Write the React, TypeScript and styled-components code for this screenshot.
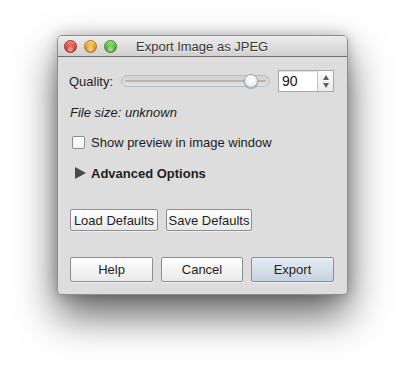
import styled, { createGlobalStyle } from 'styled-components'

const GlobalStyle = createGlobalStyle`
  html, body {
    margin: 0;
    background: #ffffff;
  }
  body {
    font-family: "Liberation Sans", Arial, sans-serif;
    font-size: 13px;
    color: #1e1e1e;
  }
`

const Page = styled.div`
  width: 405px;
  height: 374px;
  padding: 35px 0 0 57px;
  box-sizing: border-box;
  overflow: hidden;
`

const Window = styled.div`
  width: 291px;
  height: 260px;
  box-sizing: border-box;
  display: flex;
  flex-direction: column;
  background: #dddddd;
  border: 1px solid #8e8e8e;
  border-radius: 5px 5px 4px 4px;
  box-shadow: 0 20px 40px rgba(0, 0, 0, 0.62), 0 0 14px rgba(0, 0, 0, 0.22);
  overflow: hidden;
`

const TitleBar = styled.div`
  height: 20px;
  flex: none;
  display: flex;
  align-items: center;
  padding-left: 6px;
  background: linear-gradient(#ededed, #d0d0d0);
  border-bottom: 1px solid #6f6f6f;
`

const Lights = styled.div`
  display: flex;
  gap: 7px;
`

const Light = styled.span<{ $color: string; $edge: string }>`
  width: 13px;
  height: 13px;
  border-radius: 50%;
  box-sizing: border-box;
  border: 1px solid ${p => p.$edge};
  background: radial-gradient(circle at 50% 80%, #ffffff99 0, transparent 40%),
    radial-gradient(circle at 50% 30%, ${p => p.$color} 0, ${p => p.$edge} 110%);
  box-shadow: inset 0 1px 1px rgba(255, 255, 255, 0.5);
`

const Title = styled.span`
  margin-left: 19px;
  font-size: 13px;
  color: #383838;
  text-shadow: 0 1px 0 rgba(255, 255, 255, 0.6);
`

const Body = styled.div`
  flex: 1;
  display: flex;
  flex-direction: column;
  padding: 13px 13px 12px 11px;
`

const QualityRow = styled.div`
  height: 22px;
  display: flex;
  align-items: center;
`

const Label = styled.span`
  width: 52px;
`

const Track = styled.div`
  width: 150px;
  height: 12px;
  box-sizing: border-box;
  border: 1px solid #b0bdca;
  border-radius: 7px;
  background: linear-gradient(#d2d2d2, #e2e2e2);
  position: relative;

  &::after {
    content: '';
    position: absolute;
    left: 3px;
    right: 3px;
    top: 4px;
    height: 2px;
    background: #b5b5b5;
    border-radius: 1px;
  }
`

const Thumb = styled.span`
  position: absolute;
  top: -2px;
  width: 14px;
  height: 14px;
  box-sizing: border-box;
  border-radius: 50%;
  border: 1px solid #a5a5a5;
  background: radial-gradient(circle at 50% 35%, #ffffff 0, #f1f1f1 55%, #d5d5d5 100%);
  box-shadow: 0 1px 1px rgba(0, 0, 0, 0.25);
  z-index: 1;
`

const Spin = styled.div`
  margin-left: 8px;
  display: flex;
  height: 22px;
  box-sizing: border-box;
  border: 1px solid #a9a9a9;
  background: #ffffff;
`

const SpinInput = styled.span`
  width: 35px;
  padding-left: 3px;
  display: flex;
  align-items: center;
  font-size: 14px;
  color: #111;
  box-shadow: inset 0 1px 1px rgba(0, 0, 0, 0.12);
`

const Stepper = styled.span`
  width: 15px;
  border-left: 1px solid #c4c4c4;
  background: linear-gradient(#fbfbfb, #ececec);
  display: flex;
  flex-direction: column;
  align-items: center;
  justify-content: center;
  gap: 3px;
`

const Arrow = styled.span<{ $up?: boolean }>`
  width: 0;
  height: 0;
  border-left: 3px solid transparent;
  border-right: 3px solid transparent;
  ${p => (p.$up ? 'border-bottom: 5px solid #5e5e5e;' : 'border-top: 5px solid #5e5e5e;')}
`

const FileSize = styled.div`
  margin-top: 13px;
  margin-left: 1px;
  line-height: 16px;
  font-style: italic;
`

const CheckRow = styled.label`
  margin-top: 13px;
  height: 16px;
  display: flex;
  align-items: center;
  gap: 6px;
  padding-left: 3px;
`

const Box = styled.span`
  width: 13px;
  height: 13px;
  box-sizing: border-box;
  border: 1px solid #8c8c8c;
  border-radius: 2px;
  background: linear-gradient(#ffffff, #f3f3f3);
`

const Expander = styled.div`
  margin-top: 15px;
  height: 16px;
  display: flex;
  align-items: center;
  gap: 5px;
  padding-left: 6px;
  font-weight: bold;
`

const Triangle = styled.span`
  width: 0;
  height: 0;
  border-top: 6px solid transparent;
  border-bottom: 6px solid transparent;
  border-left: 11px solid #4a4a4a;
`

const ButtonRow = styled.div<{ $top: number; $gap: number }>`
  margin-top: ${p => p.$top}px;
  display: flex;
  gap: ${p => p.$gap}px;
  padding-left: 1px;
`

const Button = styled.button<{ $w: number; $h: number; $default?: boolean }>`
  width: ${p => p.$w}px;
  height: ${p => p.$h}px;
  padding: 0;
  font-family: "Liberation Sans", Arial, sans-serif;
  font-size: 13px;
  color: #1e1e1e;
  border: 1px solid #8e8e8e;
  border-radius: 2px;
  background: ${p =>
    p.$default ? 'linear-gradient(#e6edf3, #c5d3df)' : 'linear-gradient(#ffffff, #e9e9e9)'};
  box-shadow: 0 1px 0 rgba(255, 255, 255, 0.5);
`

export default function App() {
  return (
    <Page>
      <GlobalStyle />
      <Window>
        <TitleBar>
          <Lights>
            <Light $color="#ff6f63" $edge="#9c231c" />
            <Light $color="#ffcc55" $edge="#a86e12" />
            <Light $color="#86dc5e" $edge="#367f20" />
          </Lights>
          <Title>Export Image as JPEG</Title>
        </TitleBar>
        <Body>
          <QualityRow>
            <Label>Quality:</Label>
            <Track>
              <Thumb style={{ left: `${(90 / 100) * 150 - 13}px` }} />
            </Track>
            <Spin>
              <SpinInput>90</SpinInput>
              <Stepper>
                <Arrow $up />
                <Arrow />
              </Stepper>
            </Spin>
          </QualityRow>
          <FileSize>File size: unknown</FileSize>
          <CheckRow>
            <Box />
            Show preview in image window
          </CheckRow>
          <Expander>
            <Triangle />
            Advanced Options
          </Expander>
          <ButtonRow $top={28} $gap={8}>
            <Button $w={88} $h={22}>Load Defaults</Button>
            <Button $w={86} $h={22}>Save Defaults</Button>
          </ButtonRow>
          <ButtonRow $top={26} $gap={8}>
            <Button $w={83} $h={25}>Help</Button>
            <Button $w={82} $h={25}>Cancel</Button>
            <Button $w={83} $h={25} $default>Export</Button>
          </ButtonRow>
        </Body>
      </Window>
    </Page>
  )
}
